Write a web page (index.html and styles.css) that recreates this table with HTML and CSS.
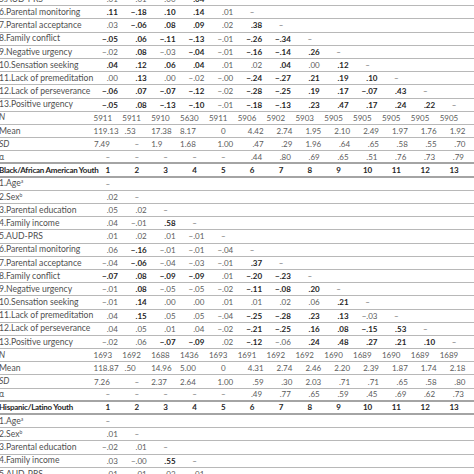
FILE: index.html
```html
<!DOCTYPE html>
<html>
<head>
<meta charset="utf-8">
<link rel="stylesheet" href="styles.css">
</head>
<body>
<div class="table">
  <div class="row"><div class="label">5.AUD-PRS</div><div class="c">−.01</div><div class="c">−.01</div><div class="c">−.00</div><div class="c b">.04</div><div class="c d">–</div><div class="c"></div><div class="c"></div><div class="c"></div><div class="c"></div><div class="c"></div><div class="c"></div><div class="c"></div><div class="c"></div></div>
  <div class="row"><div class="label">6.Parental monitoring</div><div class="c b">.11</div><div class="c b">−.18</div><div class="c b">.10</div><div class="c b">.14</div><div class="c">.01</div><div class="c d">–</div><div class="c"></div><div class="c"></div><div class="c"></div><div class="c"></div><div class="c"></div><div class="c"></div><div class="c"></div></div>
  <div class="row"><div class="label">7.Parental acceptance</div><div class="c">.03</div><div class="c b">−.06</div><div class="c b">.08</div><div class="c b">.09</div><div class="c">.02</div><div class="c b">.38</div><div class="c d">–</div><div class="c"></div><div class="c"></div><div class="c"></div><div class="c"></div><div class="c"></div><div class="c"></div></div>
  <div class="row"><div class="label">8.Family conflict</div><div class="c b">−.05</div><div class="c b">.06</div><div class="c b">−.11</div><div class="c b">−.13</div><div class="c">−.01</div><div class="c b">−.26</div><div class="c b">−.34</div><div class="c d">–</div><div class="c"></div><div class="c"></div><div class="c"></div><div class="c"></div><div class="c"></div></div>
  <div class="row"><div class="label">9.Negative urgency</div><div class="c">−.02</div><div class="c b">.08</div><div class="c">−.03</div><div class="c b">−.04</div><div class="c">−.01</div><div class="c b">−.16</div><div class="c b">−.14</div><div class="c b">.26</div><div class="c d">–</div><div class="c"></div><div class="c"></div><div class="c"></div><div class="c"></div></div>
  <div class="row"><div class="label">10.Sensation seeking</div><div class="c b">.04</div><div class="c b">.12</div><div class="c b">.06</div><div class="c b">.04</div><div class="c">.01</div><div class="c">.02</div><div class="c b">.04</div><div class="c">.00</div><div class="c b">.12</div><div class="c d">–</div><div class="c"></div><div class="c"></div><div class="c"></div></div>
  <div class="row"><div class="label">11.Lack of premeditation</div><div class="c">.00</div><div class="c b">.13</div><div class="c">.00</div><div class="c">−.02</div><div class="c">−.00</div><div class="c b">−.24</div><div class="c b">−.27</div><div class="c b">.21</div><div class="c b">.19</div><div class="c b">.10</div><div class="c d">–</div><div class="c"></div><div class="c"></div></div>
  <div class="row"><div class="label">12.Lack of perseverance</div><div class="c b">−.06</div><div class="c b">.07</div><div class="c b">−.07</div><div class="c b">−.12</div><div class="c">−.02</div><div class="c b">−.28</div><div class="c b">−.25</div><div class="c b">.19</div><div class="c b">.17</div><div class="c b">−.07</div><div class="c b">.43</div><div class="c d">–</div><div class="c"></div></div>
  <div class="row"><div class="label">13.Positive urgency</div><div class="c b">−.05</div><div class="c b">.08</div><div class="c b">−.13</div><div class="c b">−.10</div><div class="c">−.01</div><div class="c b">−.18</div><div class="c b">−.13</div><div class="c b">.23</div><div class="c b">.47</div><div class="c b">.17</div><div class="c b">.24</div><div class="c b">.22</div><div class="c d">–</div></div>
  <div class="row row-n"><div class="label"><i>N</i></div><div class="c">5911</div><div class="c">5911</div><div class="c">5910</div><div class="c">5630</div><div class="c">5911</div><div class="c">5906</div><div class="c">5902</div><div class="c">5903</div><div class="c">5905</div><div class="c">5905</div><div class="c">5905</div><div class="c">5905</div><div class="c">5905</div></div>
  <div class="row row-stat"><div class="label">Mean</div><div class="c">119.13</div><div class="c">.53</div><div class="c">17.38</div><div class="c">8.17</div><div class="c zero">0</div><div class="c">4.42</div><div class="c">2.74</div><div class="c">1.95</div><div class="c">2.10</div><div class="c">2.49</div><div class="c">1.97</div><div class="c">1.76</div><div class="c">1.92</div></div>
  <div class="row row-stat"><div class="label"><i>SD</i></div><div class="c">7.49</div><div class="c d">–</div><div class="c">1.9</div><div class="c">1.68</div><div class="c">1.00</div><div class="c">.47</div><div class="c">.29</div><div class="c">1.96</div><div class="c">.64</div><div class="c">.65</div><div class="c">.58</div><div class="c">.55</div><div class="c">.70</div></div>
  <div class="row row-alpha"><div class="label">α</div><div class="c d">–</div><div class="c d">–</div><div class="c d">–</div><div class="c d">–</div><div class="c d">–</div><div class="c">.44</div><div class="c">.80</div><div class="c">.69</div><div class="c">.65</div><div class="c">.51</div><div class="c">.76</div><div class="c">.73</div><div class="c">.79</div></div>

  <div class="row row-head"><div class="label">Black/African American Youth</div><div class="h">1</div><div class="h">2</div><div class="h">3</div><div class="h">4</div><div class="h">5</div><div class="h">6</div><div class="h">7</div><div class="h">8</div><div class="h">9</div><div class="h">10</div><div class="h">11</div><div class="h">12</div><div class="h">13</div></div>
  <div class="row"><div class="label">1.Age<sup>a</sup></div><div class="c d">–</div><div class="c"></div><div class="c"></div><div class="c"></div><div class="c"></div><div class="c"></div><div class="c"></div><div class="c"></div><div class="c"></div><div class="c"></div><div class="c"></div><div class="c"></div><div class="c"></div></div>
  <div class="row"><div class="label">2.Sex<sup>b</sup></div><div class="c">.02</div><div class="c d">–</div><div class="c"></div><div class="c"></div><div class="c"></div><div class="c"></div><div class="c"></div><div class="c"></div><div class="c"></div><div class="c"></div><div class="c"></div><div class="c"></div><div class="c"></div></div>
  <div class="row"><div class="label">3.Parental education</div><div class="c">.05</div><div class="c">.02</div><div class="c d">–</div><div class="c"></div><div class="c"></div><div class="c"></div><div class="c"></div><div class="c"></div><div class="c"></div><div class="c"></div><div class="c"></div><div class="c"></div><div class="c"></div></div>
  <div class="row"><div class="label">4.Family income</div><div class="c">.04</div><div class="c">−.01</div><div class="c b">.58</div><div class="c d">–</div><div class="c"></div><div class="c"></div><div class="c"></div><div class="c"></div><div class="c"></div><div class="c"></div><div class="c"></div><div class="c"></div><div class="c"></div></div>
  <div class="row"><div class="label">5.AUD-PRS</div><div class="c">.01</div><div class="c">.02</div><div class="c">.01</div><div class="c">−.01</div><div class="c d">–</div><div class="c"></div><div class="c"></div><div class="c"></div><div class="c"></div><div class="c"></div><div class="c"></div><div class="c"></div><div class="c"></div></div>
  <div class="row"><div class="label">6.Parental monitoring</div><div class="c">.06</div><div class="c b">−.16</div><div class="c">−.01</div><div class="c">−.01</div><div class="c">−.04</div><div class="c d">–</div><div class="c"></div><div class="c"></div><div class="c"></div><div class="c"></div><div class="c"></div><div class="c"></div><div class="c"></div></div>
  <div class="row"><div class="label">7.Parental acceptance</div><div class="c">−.04</div><div class="c b">−.06</div><div class="c">−.04</div><div class="c">−.03</div><div class="c">−.01</div><div class="c b">.37</div><div class="c d">–</div><div class="c"></div><div class="c"></div><div class="c"></div><div class="c"></div><div class="c"></div><div class="c"></div></div>
  <div class="row"><div class="label">8.Family conflict</div><div class="c b">−.07</div><div class="c b">.08</div><div class="c b">−.09</div><div class="c b">−.09</div><div class="c">.01</div><div class="c b">−.20</div><div class="c b">−.23</div><div class="c d">–</div><div class="c"></div><div class="c"></div><div class="c"></div><div class="c"></div><div class="c"></div></div>
  <div class="row"><div class="label">9.Negative urgency</div><div class="c">−.01</div><div class="c b">.08</div><div class="c">−.05</div><div class="c">−.05</div><div class="c">−.02</div><div class="c b">−.11</div><div class="c b">−.08</div><div class="c b">.20</div><div class="c d">–</div><div class="c"></div><div class="c"></div><div class="c"></div><div class="c"></div></div>
  <div class="row"><div class="label">10.Sensation seeking</div><div class="c">−.01</div><div class="c b">.14</div><div class="c">.00</div><div class="c">.00</div><div class="c">.01</div><div class="c">.01</div><div class="c">.02</div><div class="c">.06</div><div class="c b">.21</div><div class="c d">–</div><div class="c"></div><div class="c"></div><div class="c"></div></div>
  <div class="row"><div class="label">11.Lack of premeditation</div><div class="c">.04</div><div class="c b">.15</div><div class="c">.05</div><div class="c">.05</div><div class="c">−.04</div><div class="c b">−.25</div><div class="c b">−.28</div><div class="c b">.23</div><div class="c b">.13</div><div class="c">−.03</div><div class="c d">–</div><div class="c"></div><div class="c"></div></div>
  <div class="row"><div class="label">12.Lack of perseverance</div><div class="c">.04</div><div class="c">.05</div><div class="c">.01</div><div class="c">.04</div><div class="c">−.02</div><div class="c b">−.21</div><div class="c b">−.25</div><div class="c b">.16</div><div class="c b">.08</div><div class="c b">−.15</div><div class="c b">.53</div><div class="c d">–</div><div class="c"></div></div>
  <div class="row"><div class="label">13.Positive urgency</div><div class="c">−.02</div><div class="c">.06</div><div class="c b">−.07</div><div class="c b">−.09</div><div class="c">.02</div><div class="c b">−.12</div><div class="c">−.06</div><div class="c b">.24</div><div class="c b">.48</div><div class="c b">.27</div><div class="c b">.21</div><div class="c b">.10</div><div class="c d">–</div></div>
  <div class="row row-n"><div class="label"><i>N</i></div><div class="c">1693</div><div class="c">1692</div><div class="c">1688</div><div class="c">1436</div><div class="c">1693</div><div class="c">1691</div><div class="c">1692</div><div class="c">1692</div><div class="c">1690</div><div class="c">1689</div><div class="c">1690</div><div class="c">1689</div><div class="c">1689</div></div>
  <div class="row row-stat"><div class="label">Mean</div><div class="c">118.87</div><div class="c">.50</div><div class="c">14.96</div><div class="c">5.00</div><div class="c zero">0</div><div class="c">4.31</div><div class="c">2.74</div><div class="c">2.46</div><div class="c">2.20</div><div class="c">2.39</div><div class="c">1.87</div><div class="c">1.74</div><div class="c">2.18</div></div>
  <div class="row row-stat"><div class="label"><i>SD</i></div><div class="c">7.26</div><div class="c d">–</div><div class="c">2.37</div><div class="c">2.64</div><div class="c">1.00</div><div class="c">.59</div><div class="c">.30</div><div class="c">2.03</div><div class="c">.71</div><div class="c">.71</div><div class="c">.65</div><div class="c">.58</div><div class="c">.80</div></div>
  <div class="row row-alpha"><div class="label">α</div><div class="c d">–</div><div class="c d">–</div><div class="c d">–</div><div class="c d">–</div><div class="c d">–</div><div class="c">.49</div><div class="c">.77</div><div class="c">.65</div><div class="c">.59</div><div class="c">.45</div><div class="c">.69</div><div class="c">.62</div><div class="c">.73</div></div>

  <div class="row row-head"><div class="label">Hispanic/Latino Youth</div><div class="h">1</div><div class="h">2</div><div class="h">3</div><div class="h">4</div><div class="h">5</div><div class="h">6</div><div class="h">7</div><div class="h">8</div><div class="h">9</div><div class="h">10</div><div class="h">11</div><div class="h">12</div><div class="h">13</div></div>
  <div class="row"><div class="label">1.Age<sup>a</sup></div><div class="c d">–</div><div class="c"></div><div class="c"></div><div class="c"></div><div class="c"></div><div class="c"></div><div class="c"></div><div class="c"></div><div class="c"></div><div class="c"></div><div class="c"></div><div class="c"></div><div class="c"></div></div>
  <div class="row"><div class="label">2.Sex<sup>b</sup></div><div class="c">.01</div><div class="c d">–</div><div class="c"></div><div class="c"></div><div class="c"></div><div class="c"></div><div class="c"></div><div class="c"></div><div class="c"></div><div class="c"></div><div class="c"></div><div class="c"></div><div class="c"></div></div>
  <div class="row"><div class="label">3.Parental education</div><div class="c">−.02</div><div class="c">.01</div><div class="c d">–</div><div class="c"></div><div class="c"></div><div class="c"></div><div class="c"></div><div class="c"></div><div class="c"></div><div class="c"></div><div class="c"></div><div class="c"></div><div class="c"></div></div>
  <div class="row"><div class="label">4.Family income</div><div class="c">.03</div><div class="c">−.00</div><div class="c b">.55</div><div class="c d">–</div><div class="c"></div><div class="c"></div><div class="c"></div><div class="c"></div><div class="c"></div><div class="c"></div><div class="c"></div><div class="c"></div><div class="c"></div></div>
  <div class="row"><div class="label">5.AUD-PRS</div><div class="c">.01</div><div class="c">.01</div><div class="c">.03</div><div class="c">.01</div><div class="c d">–</div><div class="c"></div><div class="c"></div><div class="c"></div><div class="c"></div><div class="c"></div><div class="c"></div><div class="c"></div><div class="c"></div></div>
</div>
</body>
</html>
```
FILE: styles.css
```css
html, body {
  margin: 0;
  padding: 0;
  background: #ffffff;
  overflow: hidden;
}

body {
  font-family: "Lato", "Open Sans", sans-serif;
  font-size: 8.6px;
  color: #555555;
}

.table {
  width: 480px;
  margin-top: -7px;
  margin-left: -2px;
}

.row {
  display: grid;
  grid-template-columns: 95.5px repeat(13, 28.85px) 1fr;
  height: 13.19px;
  box-sizing: border-box;
  border-bottom: 1px solid #b8b8b8;
  align-items: center;
  line-height: 1;
  white-space: nowrap;
}

.label {
  padding-left: 1px;
  color: #4f4f4f;
}

.label sup {
  font-size: 5px;
  line-height: 0;
  vertical-align: 3px;
}

.c {
  text-align: right;
  padding-right: 4.5px;
  color: #5c5c5c;
  font-size: 8px;
}

.c.b {
  font-weight: 700;
  color: #262626;
}

.c.d {
  text-align: center;
  padding-right: 0;
}

.h {
  text-align: center;
  font-weight: 700;
  color: #262626;
  font-size: 8px;
}

.row-head .label {
  font-weight: 700;
  color: #262626;
  font-size: 8px;
  letter-spacing: -0.25px;
}

.row-head {
  border-bottom: 2px solid #a4a4a4;
}

.row-alpha {
  border-bottom: 2px solid #a4a4a4;
}

/* N row: values sit left of the column centre, more so in the first columns */
.row-n .c {
  padding-right: 11.8px;
}

.row-n .c:nth-child(2) { padding-right: 12.4px; }
.row-n .c:nth-child(3) { padding-right: 17.8px; }
.row-n .c:nth-child(4) { padding-right: 21px; }
.row-n .c:nth-child(5) { padding-right: 22px; }
.row-n .c:nth-child(6) { padding-right: 24.8px; }

/* Mean / SD rows: first columns shifted left */
.row-stat .c:nth-child(2) { padding-right: 12.5px; }
.row-stat .c:nth-child(3) { padding-right: 15.5px; }
.row-stat .c:nth-child(4) { padding-right: 18px; }
.row-stat .c:nth-child(5) { padding-right: 13px; }
.row-stat .c:nth-child(3).d { padding-right: 0; }

.row-stat .c.zero {
  text-align: center;
  padding-right: 0;
}

.row-stat .c:nth-child(n+7) {
  padding-right: 3px;
}
```
